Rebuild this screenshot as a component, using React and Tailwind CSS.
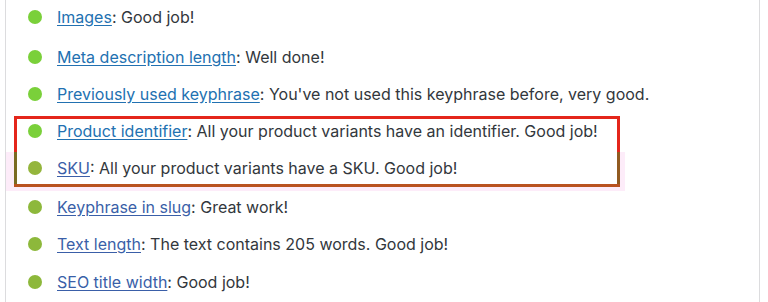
import React from "react";

const font = { fontFamily: 'Inter, "Liberation Sans", Arial, sans-serif' };

function Row({ label, text, dot = "bg-[#7ad03a]", link = "text-[#2271b1]", inBox = false, className = "" }) {
  return (
    <div className={`flex items-center h-[20px] ${className}`}>
      <span className={`block w-[14px] h-[14px] rounded-full shrink-0 ${dot} ${inBox ? "ml-[11px]" : "ml-[22px]"}`} />
      <span className="ml-[15px] text-[16px] leading-[20px] text-[#32373c] whitespace-nowrap">
        <a className={`underline underline-offset-2 ${link}`} href="#">{label}</a>: {text}
      </span>
    </div>
  );
}

export default function App() {
  return (
    <div className="w-[768px] h-[302px] bg-white overflow-hidden" style={font}>
      <div className="ml-[5px] w-[755px] h-[302px] border-l border-r border-[#dcdcde] pt-[7px]">
        <Row label="Images" text="Good job!" />
        <Row className="mt-[20px]" label="Meta description length" text="Well done!" />
        <Row className="mt-[17px]" label="Previously used keyphrase" text="You've not used this keyphrase before, very good." />
        <div className="mt-[12px] w-[619px] pl-[8px] pr-[4px] pb-[4px] bg-[linear-gradient(to_bottom,transparent_36px,#fdecf9_36px)]">
          <div className="w-[606px] bg-white border-t-[3px] border-t-[#e4261b] border-b-[3px] border-b-[#b9521f]">
            <div className="border-l-[3px] border-r-[3px] border-l-[#e4261b] border-r-[#e4261b] pt-[2px] h-[33px]">
              <Row inBox label="Product identifier" text="All your product variants have an identifier. Good job!" />
            </div>
            <div className="border-l-[3px] border-r-[3px] border-l-[#7a6b22] border-r-[#915a20] pt-[6px] h-[32px]">
              <Row inBox dot="bg-[#94b53c]" link="text-[#3b5ea8]" label="SKU" text="All your product variants have a SKU. Good job!" />
            </div>
          </div>
        </div>
        <Row className="mt-[6px]" dot="bg-[#8db83b]" link="text-[#3a5fa8]" label="Keyphrase in slug" text="Great work!" />
        <Row className="mt-[17px]" dot="bg-[#8db83b]" link="text-[#3a5fa8]" label="Text length" text="The text contains 205 words. Good job!" />
        <Row className="mt-[18px]" dot="bg-[#8db83b]" link="text-[#3a5fa8]" label="SEO title width" text="Good job!" />
      </div>
    </div>
  );
}
